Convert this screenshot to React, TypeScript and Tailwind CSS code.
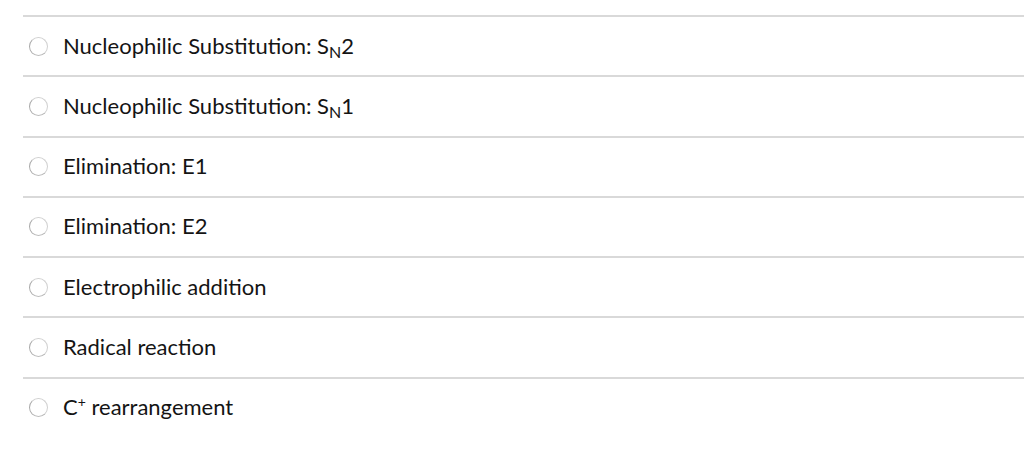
import React from "react"

const options: React.ReactNode[] = [
  <>Nucleophilic Substitution: S<sub className="text-[16px] relative top-[4px] align-baseline">N</sub>2</>,
  <>Nucleophilic Substitution: S<sub className="text-[16px] relative top-[4px] align-baseline">N</sub>1</>,
  <>Elimination: E1</>,
  <>Elimination: E2</>,
  <>Electrophilic addition</>,
  <>Radical reaction</>,
  <>C<sup className="text-[14px] relative -top-[8px] align-baseline">+</sup> rearrangement</>,
]

export default function App() {
  return (
    <main className="min-h-screen w-[1024px] h-[450px] bg-white overflow-hidden pt-[15px] pl-[23px]" style={{ fontFamily: "Lato, 'Open Sans', sans-serif" }}>
      {options.map((label, i) => (
        <div key={i} className="h-[60.25px] border-t-2 border-[#d9d9d9] flex items-center">
          <span className="ml-[6px] mr-[15px] w-[19px] h-[19px] rounded-full border-[1.5px] border-[#d0d0d0] border-l-[#a9a9a9] border-b-[#bcbcbc] bg-white shrink-0" />
          <span className="text-[22px] text-[#141414] leading-none -mt-[1px]">{label}</span>
        </div>
      ))}
    </main>
  )
}
